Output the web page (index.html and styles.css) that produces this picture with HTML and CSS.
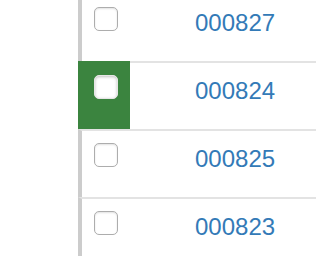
FILE: index.html
```html
<!DOCTYPE html>
<html lang="en">

<head>
    <meta charset="UTF-8" />
    <meta name="viewport" content="width=device-width, initial-scale=1.0" />
    <title>Orders</title>
    <link rel="stylesheet" href="styles.css">
</head>

<body>
    <div class="list">
        <div class="row first">
            <div class="check"><span class="box"></span></div>
            <div class="num"><a href="#">000827</a></div>
        </div>
        <div class="row">
            <div class="check selected"><span class="box"></span></div>
            <div class="num"><a href="#">000824</a></div>
        </div>
        <div class="row">
            <div class="check"><span class="box"></span></div>
            <div class="num"><a href="#">000825</a></div>
        </div>
        <div class="row">
            <div class="check"><span class="box"></span></div>
            <div class="num"><a href="#">000823</a></div>
        </div>
    </div>
</body>

</html>
```

FILE: styles.css
```css
body {
    font-family: "Liberation Sans", Arial, sans-serif;
    background-color: #fff;
    margin: 0;
    overflow: hidden;
}

.list {
    margin-left: 78px;
    margin-top: -7px;
}

.row {
    display: flex;
    height: 68px;
}

.row.first .check,
.row.first .num {
    border-top-color: transparent;
}

.check {
    width: 24px;
    padding: 12px;
    border-left: 4px solid #cccccc;
    border-top: 2px solid #e3e3e3;
}

.check.selected {
    background-color: #3b843f;
    border-left-color: #3b843f;
    border-top-color: #3b843f;
}

.box {
    display: block;
    width: 22px;
    height: 22px;
    background-color: #fff;
    border: 1px solid #adadad;
    border-radius: 5px;
    box-shadow: inset 0 1px 2px rgba(0, 0, 0, 0.12);
}

.selected .box {
    border-color: #e6e6e6;
    box-shadow: inset 0 1px 3px rgba(0, 0, 0, 0.25);
}

.num {
    flex: 1;
    border-top: 2px solid #e3e3e3;
    padding: 14px 0 0 65px;
    font-size: 24px;
}

.num a {
    color: #337ab7;
    text-decoration: none;
}
```
